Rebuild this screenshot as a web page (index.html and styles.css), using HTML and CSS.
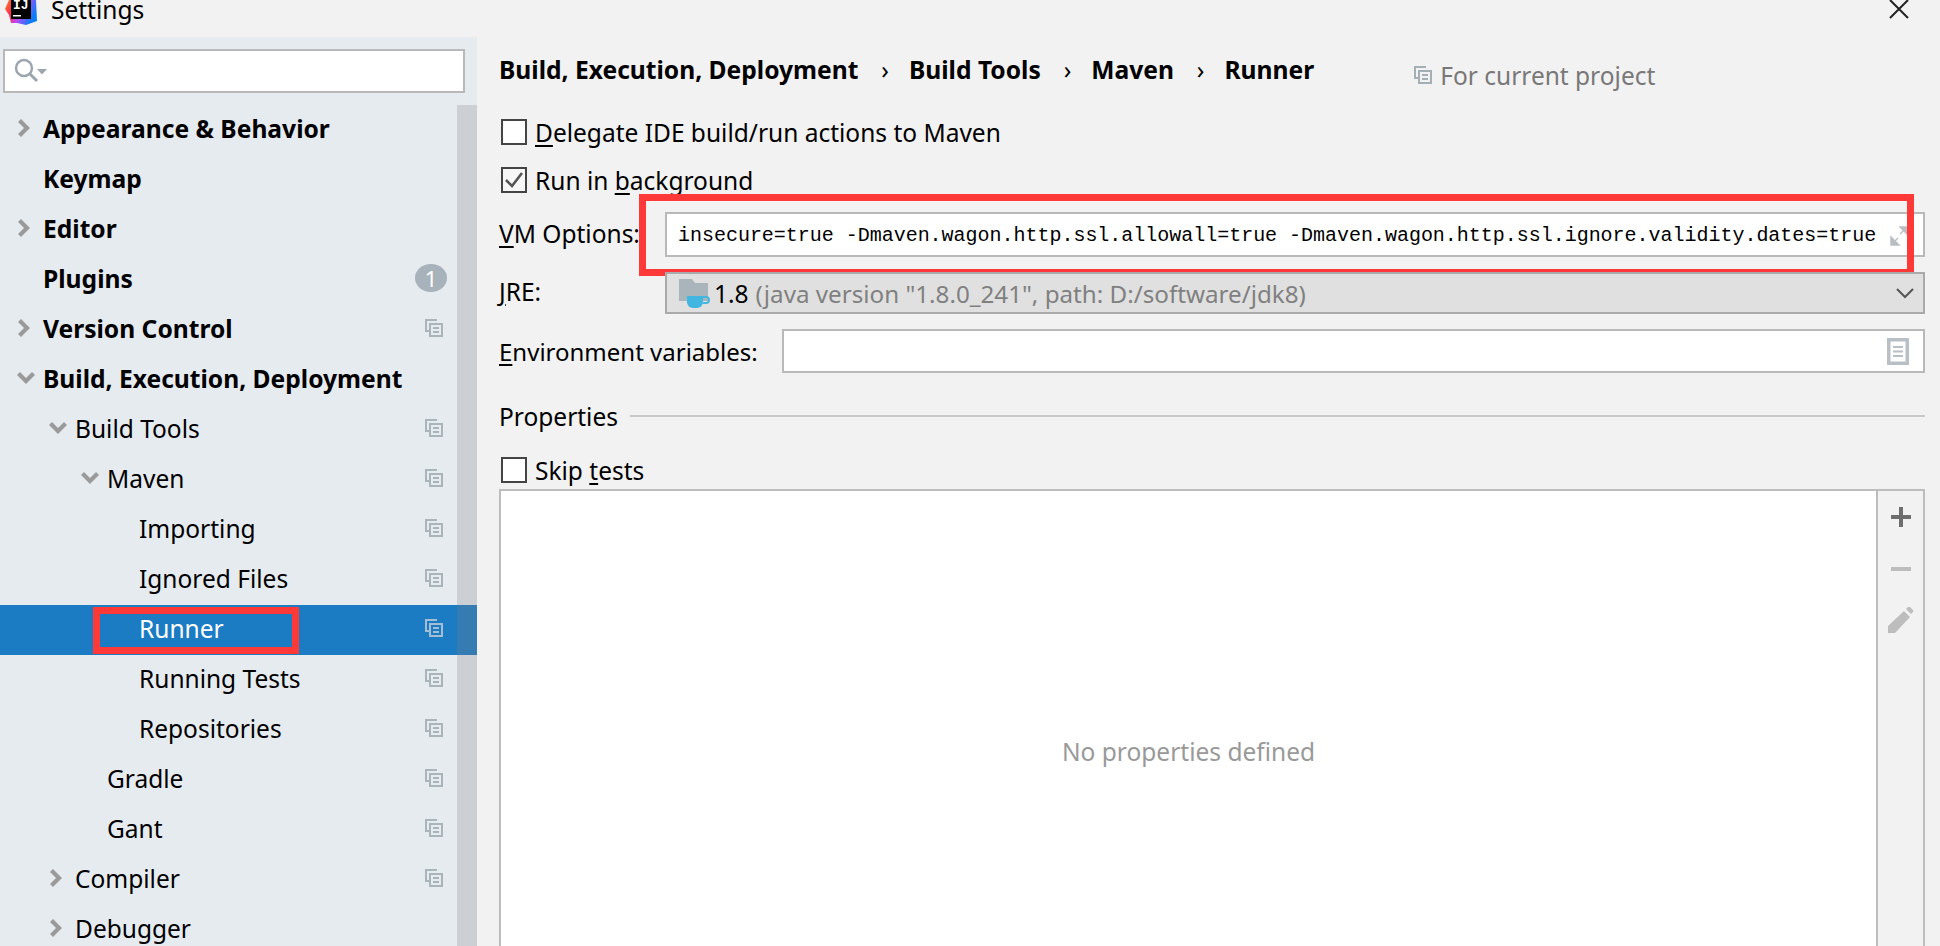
FILE: index.html
```html
<!DOCTYPE html>
<html lang="en">
<head>
<meta charset="utf-8">
<title>Settings</title>
<link rel="stylesheet" href="styles.css">
</head>
<body>
<svg class="defs" width="0" height="0" aria-hidden="true">
  <defs>
    <symbol id="copy" viewBox="0 0 18 18">
      <path d="M12 1H1v11h3" fill="none" stroke="currentColor" stroke-width="2"/>
      <path d="M5 5h12v12H5z" fill="none" stroke="currentColor" stroke-width="2"/>
      <path d="M8 9h6M8 13h6" fill="none" stroke="currentColor" stroke-width="2"/>
    </symbol>
    <symbol id="right" viewBox="0 0 24 20">
      <path d="M6.500 2.500l7.500 7.500-7.500 7.500" fill="none" stroke="#9a9a9a" stroke-width="4.200"/>
    </symbol>
    <symbol id="down" viewBox="0 0 24 20">
      <path d="M5.500 5.500l7.500 7.500 7.500-7.500" fill="none" stroke="#9a9a9a" stroke-width="4.200"/>
    </symbol>
    <linearGradient id="logo-grad" x1="0" y1="0" x2="1" y2="0.4">
      <stop offset="0" stop-color="#fc801d"/>
      <stop offset="0.35" stop-color="#fe2857"/>
      <stop offset="0.6" stop-color="#b74af7"/>
      <stop offset="1" stop-color="#087cfa"/>
    </linearGradient>
  </defs>
</svg>
<header class="titlebar">
  <svg class="logo" width="34" height="34" viewBox="0 0 34 34">
    <path d="M0 9L4 0h27l1 21-11 4-9-2-6 0-2-8z" fill="url(#logo-grad)"/>
    <path d="M6 0h20v19H6z" fill="#000"/>
    <text class="logo-text" x="8" y="9">IJ</text>
    <path d="M8 15h8v1.500H8z" fill="#fff"/>
  </svg>
  <span class="title">Settings</span>
  <svg class="close" width="20" height="20" viewBox="0 0 20 20">
    <path d="M1 1l18 18M19 1L1 19" stroke="#222" stroke-width="2" fill="none"/>
  </svg>
</header>
<div class="content">
  <aside class="sidebar">
    <div class="search">
      <svg width="34" height="26" viewBox="0 0 34 26">
        <circle cx="11" cy="11" r="8" fill="none" stroke="#9aa5ad" stroke-width="2.400"/>
        <path d="M17 17l7 7" stroke="#9aa5ad" stroke-width="3"/>
        <path d="M24 12h10l-5 5.500z" fill="#9aa5ad"/>
      </svg>
    </div>
    <div class="tree">
      <div class="scrollthumb"></div>
      <div class="row l0 strong"><svg class="arrow"><use href="#right"/></svg><span class="label">Appearance &amp; Behavior</span></div>
      <div class="row l0 strong"><span class="arrow"></span><span class="label">Keymap</span></div>
      <div class="row l0 strong"><svg class="arrow"><use href="#right"/></svg><span class="label">Editor</span></div>
      <div class="row l0 strong"><span class="arrow"></span><span class="label">Plugins</span><span class="badge">1</span></div>
      <div class="row l0 strong"><svg class="arrow"><use href="#right"/></svg><span class="label">Version Control</span><svg class="copy"><use href="#copy"/></svg></div>
      <div class="row l0 strong"><svg class="arrow"><use href="#down"/></svg><span class="label">Build, Execution, Deployment</span></div>
      <div class="row l1"><svg class="arrow"><use href="#down"/></svg><span class="label">Build Tools</span><svg class="copy"><use href="#copy"/></svg></div>
      <div class="row l2"><svg class="arrow"><use href="#down"/></svg><span class="label">Maven</span><svg class="copy"><use href="#copy"/></svg></div>
      <div class="row l3"><span class="arrow"></span><span class="label">Importing</span><svg class="copy"><use href="#copy"/></svg></div>
      <div class="row l3"><span class="arrow"></span><span class="label">Ignored Files</span><svg class="copy"><use href="#copy"/></svg></div>
      <div class="row l3 selected"><span class="arrow"></span><span class="label">Runner</span><svg class="copy"><use href="#copy"/></svg><span class="mark-runner"></span></div>
      <div class="row l3"><span class="arrow"></span><span class="label">Running Tests</span><svg class="copy"><use href="#copy"/></svg></div>
      <div class="row l3"><span class="arrow"></span><span class="label">Repositories</span><svg class="copy"><use href="#copy"/></svg></div>
      <div class="row l2"><span class="arrow"></span><span class="label">Gradle</span><svg class="copy"><use href="#copy"/></svg></div>
      <div class="row l2"><span class="arrow"></span><span class="label">Gant</span><svg class="copy"><use href="#copy"/></svg></div>
      <div class="row l1"><svg class="arrow"><use href="#right"/></svg><span class="label">Compiler</span><svg class="copy"><use href="#copy"/></svg></div>
      <div class="row l1"><svg class="arrow"><use href="#right"/></svg><span class="label">Debugger</span></div>
    </div>
  </aside>
  <main class="panel">
    <nav class="crumbs">
      <span class="crumb crumb-first">Build, Execution, Deployment</span>
      <span class="sep">›</span>
      <span class="crumb">Build Tools</span>
      <span class="sep">›</span>
      <span class="crumb">Maven</span>
      <span class="sep">›</span>
      <span class="crumb">Runner</span>
      <span class="scope"><svg class="scope-icon"><use href="#copy"/></svg>For current project</span>
    </nav>
    <label class="check check-first"><span class="box"></span><span class="check-text"><u>D</u>elegate IDE build/run actions to Maven</span></label>
    <label class="check check-second">
      <span class="box box-on">
        <svg width="22" height="22" viewBox="0 0 22 22"><path d="M3 11l6 6 10-13" fill="none" stroke="#555" stroke-width="2.600"/></svg>
      </span>
      <span class="check-text">Run in <u>b</u>ackground</span>
    </label>
    <div class="field-row vm-row">
      <span class="flabel flabel-short flabel-vm"><u>V</u>M Options:</span>
      <div class="input vm-input">
        <span class="mono">insecure=true -Dmaven.wagon.http.ssl.allowall=true -Dmaven.wagon.http.ssl.ignore.validity.dates=true</span>
        <svg class="expand" width="18" height="20" viewBox="0 0 18 20">
          <path d="M1 19v-8l8 8zM4 16l4-4" fill="#b8bec2" stroke="#b8bec2" stroke-width="1.400"/>
          <path d="M17 1v7l-7-7zM14 4l-4 4" fill="#b8bec2" stroke="#b8bec2" stroke-width="1.400"/>
        </svg>
      </div>
      <span class="mark-vm"></span>
    </div>
    <div class="field-row jre-row">
      <span class="flabel flabel-short flabel-jre"><u>J</u>RE:</span>
      <div class="combo">
        <svg class="jdk" width="32" height="30" viewBox="0 0 32 30">
          <path d="M0 1h13l3 4h13v18H0z" fill="#a9b4bb"/>
          <path d="M8 18h16v6a6 6 0 0 1-6 6h-4a6 6 0 0 1-6-6z" fill="#40b6e0"/>
          <path d="M24 19h3a2.500 2.500 0 0 1 0 6h-3" fill="none" stroke="#40b6e0" stroke-width="2"/>
        </svg>
        <span class="jre-ver">1.8</span>
        <span class="jre-path">(java version "1.8.0_241", path: D:/software/jdk8)</span>
        <svg class="combo-arrow" width="20" height="12" viewBox="0 0 20 12"><path d="M2 2l8 8 8-8" fill="none" stroke="#555" stroke-width="2"/></svg>
      </div>
    </div>
    <div class="field-row env-row">
      <span class="flabel flabel-long"><u>E</u>nvironment variables:</span>
      <div class="input env-input">
        <svg class="doc" width="22" height="27" viewBox="0 0 22 27">
          <path d="M0 0h22v27H0z" fill="#b8c0c5"/>
          <path d="M3.500 3.500h15v20h-15z" fill="#fff"/>
          <path d="M6 8h10v2H6zM6 12.500h10v2H6zM6 17h10v2H6z" fill="#b8c0c5"/>
        </svg>
      </div>
    </div>
    <div class="group"><span>Properties</span><span class="group-line"></span></div>
    <label class="check check-skip"><span class="box"></span><span class="check-text">Skip <u>t</u>ests</span></label>
    <section class="table">
      <div class="table-body">No properties defined</div>
      <div class="toolbar">
        <svg class="tool-add" width="20" height="20" viewBox="0 0 20 20"><path d="M8 0h4v8h8v4h-8v8H8v-8H0V8h8z" fill="#6e6e6e"/></svg>
        <svg class="tool-remove" width="20" height="4" viewBox="0 0 20 4"><path d="M0 0h20v4H0z" fill="#bdbdbd"/></svg>
        <svg class="tool-edit" width="26" height="26" viewBox="0 0 26 26"><path d="M0 26v-7L16 4l6 6L7 26zM18 2l2-2a2 2 0 0 1 2 0l3 3a2 2 0 0 1 0 2l-2 2z" fill="#bdbdbd"/></svg>
      </div>
    </section>
  </main>
</div>
</body>
</html>
```

FILE: styles.css
```css
* { box-sizing: border-box; }
html, body { margin: 0; height: 100%; }
body {
  width: 1940px;
  height: 946px;
  overflow: hidden;
  display: flex;
  flex-direction: column;
  background: #f2f2f2;
  color: #000;
  font-family: "Noto Sans", "Open Sans", sans-serif;
  font-size: 24.5px;
}
.defs { position: absolute; }
u { text-underline-offset: 3px; text-decoration-thickness: 2px; }

.titlebar {
  height: 37px;
  flex: none;
  display: flex;
  align-items: flex-start;
  position: relative;
  overflow: hidden;
  background: #f2f2f2;
}
.logo { margin-left: 5px; flex: none; }
.logo-text { font: bold 13px "Liberation Mono", monospace; fill: #fff; }
.title { margin: -7px 0 0 12px; line-height: 34px; }
.close { position: absolute; right: 31px; top: -1px; }

.content { flex: 1; display: flex; min-height: 0; }

.sidebar {
  width: 477px;
  flex: none;
  background: #e6ebf0;
  padding-top: 12px;
  overflow: hidden;
}
.search {
  margin-left: 3px;
  width: 462px;
  height: 44px;
  background: #fff;
  border: 2px solid #b9b9b9;
  padding: 6px 0 0 8px;
}
.tree { position: relative; margin-top: 12px; }
.scrollthumb {
  position: absolute;
  z-index: 2;
  top: 0;
  right: 0;
  width: 20px;
  height: 841px;
  background: rgba(128, 128, 128, .25);
}
.row {
  height: 50px;
  padding-bottom: 4px;
  display: flex;
  align-items: center;
  position: relative;
  white-space: nowrap;
}
.l0 { padding-left: 13px; }
.l1 { padding-left: 45px; }
.l2 { padding-left: 77px; }
.l3 { padding-left: 109px; }
.arrow { width: 24px; height: 20px; margin-right: 6px; flex: none; display: block; }
.label { flex: 1; }
.strong .label { font-weight: 700; font-size: 24.6px; }
.copy { width: 18px; height: 18px; flex: none; margin-right: 34px; color: #aab4bb; }
.badge {
  width: 32px;
  height: 28px;
  margin-right: 30px;
  border-radius: 50%;
  background: #a7b2ba;
  color: #fff;
  text-align: center;
  font-size: 22px;
  line-height: 28px;
}
.selected { background: #1b7bc3; color: #fff; }
.selected .copy { color: #a4bdd2; }
.mark-runner {
  position: absolute;
  left: 93px;
  top: 2px;
  width: 206px;
  height: 47px;
  border: 7px solid #ff3838;
}

.panel {
  flex: 1;
  min-width: 0;
  display: flex;
  flex-direction: column;
  padding: 0 15px 0 22px;
}
.crumbs {
  height: 38px;
  margin-top: 13px;
  flex: none;
  display: flex;
  align-items: center;
  white-space: nowrap;
}
.crumb { font-weight: 700; font-size: 24.6px; }
.sep { width: 50.5px; padding-left: 3px; text-align: center; }
.scope {
  display: flex;
  align-items: center;
  margin: 12px 0 0 100px;
  color: #787878;
}
.scope-icon { width: 18px; height: 18px; margin-right: 8px; color: #a3aeb5; }

.check { display: flex; align-items: center; height: 26px; flex: none; white-space: nowrap; padding-left: 2px; }
.check-first { margin-top: 31px; }
.check-second { margin-top: 22px; }
.check-skip { margin-top: 26px; }
.check-text { margin-left: -1px; }
.box {
  width: 26px;
  height: 26px;
  flex: none;
  margin-right: 9px;
  border: 2px solid #444;
  background: #fff;
  display: flex;
  align-items: center;
  justify-content: center;
}
.box-on { background: #f7f7f7; }

.field-row { display: flex; align-items: center; flex: none; position: relative; white-space: nowrap; }
.vm-row { margin-top: 19px; height: 45px; }
.jre-row { margin-top: 15px; height: 42px; }
.env-row { margin-top: 15px; height: 44px; }
.flabel { flex: none; }
.flabel-short { width: 166px; }
.flabel-long { width: 283px; font-size: 24px; }
.flabel-vm { padding-bottom: 2px; }
.flabel-jre { padding-bottom: 4px; }
.input {
  flex: 1;
  height: 100%;
  background: #fff;
  border: 2px solid #b9b9b9;
  display: flex;
  align-items: center;
  position: relative;
}
.vm-input { padding: 2px 0 0 11px; }
.mono { font: 20px "Liberation Mono", monospace; letter-spacing: -.02px; }
.expand { position: absolute; right: 15px; top: 12px; }
.mark-vm {
  position: absolute;
  left: 140px;
  right: 11px;
  top: -18px;
  height: 82px;
  border: 7px solid #ff3838;
}
.combo {
  flex: 1;
  height: 100%;
  background: #e0e0e0;
  border: 2px solid #aaa;
  display: flex;
  align-items: center;
  padding-left: 12px;
}
.jdk { margin-right: 3px; flex: none; }
.jre-ver { margin-right: 7px; }
.jre-path { color: #808080; flex: 1; font-size: 24.2px; }
.combo-arrow { margin-right: 8px; flex: none; }
.doc { position: absolute; right: 14px; top: 7px; }

.group {
  margin-top: 28px;
  height: 30px;
  flex: none;
  display: flex;
  align-items: center;
}
.group-line { flex: 1; height: 2px; margin-left: 12px; background: #c8c8c8; }

.table {
  flex: 1;
  min-height: 0;
  margin-top: 6px;
  display: flex;
  border: 2px solid #bdbdbd;
  border-bottom: 0;
}
.table-body {
  flex: 1;
  background: #fff;
  color: #999;
  display: flex;
  align-items: center;
  justify-content: center;
  padding-top: 66px;
}
.toolbar {
  width: 47px;
  flex: none;
  border-left: 2px solid #bdbdbd;
  display: flex;
  flex-direction: column;
  align-items: center;
  padding-top: 16px;
}
.tool-remove { margin-top: 40px; }
.tool-edit { margin-top: 36px; }
```
